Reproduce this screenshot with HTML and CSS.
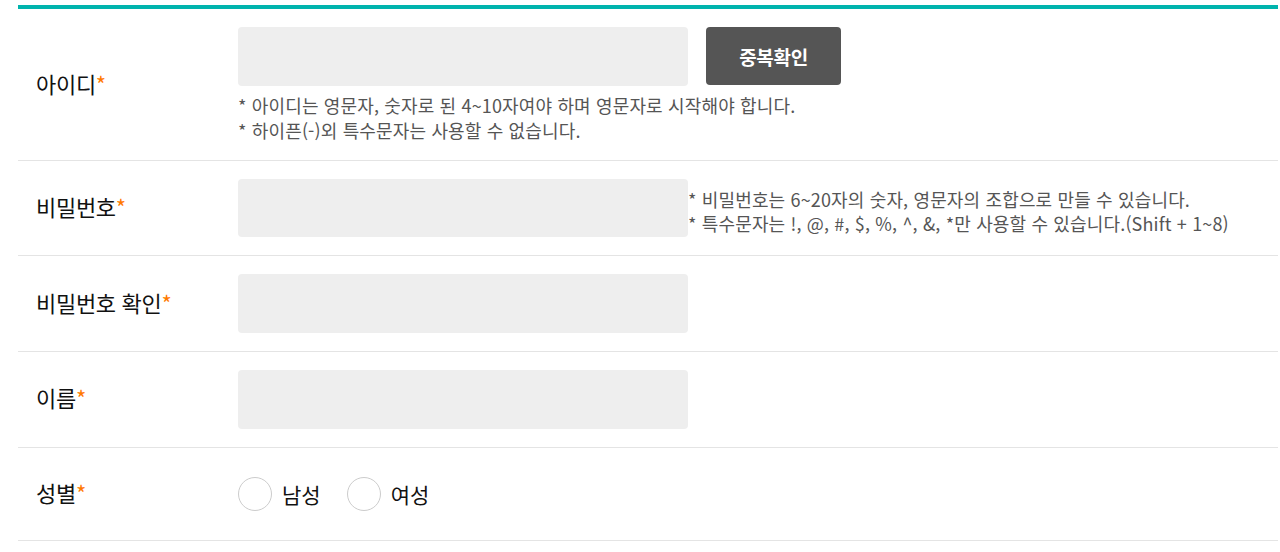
FILE: index.html
```html
<!DOCTYPE html>
<html lang="ko">
<head>
<meta charset="utf-8">
<link rel="stylesheet" href="styles.css">
</head>
<body>
<div class="form">
  <div class="row first">
    <div class="label">아이디<span class="req">*</span></div>
    <div class="field">
      <div class="line">
        <div class="input"></div>
        <button class="btn">중복확인</button>
      </div>
      <div class="help below">
        <p>* 아이디는 영문자, 숫자로 된 4~10자여야 하며 영문자로 시작해야 합니다.</p>
        <p>* 하이픈(-)외 특수문자는 사용할 수 없습니다.</p>
      </div>
    </div>
  </div>
  <div class="row">
    <div class="label">비밀번호<span class="req">*</span></div>
    <div class="field">
      <div class="line">
        <div class="input"></div>
        <div class="help side">
          <p>* 비밀번호는 6~20자의 숫자, 영문자의 조합으로 만들 수 있습니다.</p>
          <p>* 특수문자는 !, @, #, $, %, ^, &amp;, *만 사용할 수 있습니다.(Shift + 1~8)</p>
        </div>
      </div>
    </div>
  </div>
  <div class="row">
    <div class="label">비밀번호 확인<span class="req">*</span></div>
    <div class="field"><div class="input"></div></div>
  </div>
  <div class="row">
    <div class="label">이름<span class="req">*</span></div>
    <div class="field"><div class="input"></div></div>
  </div>
  <div class="row gender">
    <div class="label">성별<span class="req">*</span></div>
    <div class="field radios">
      <label class="radio"><span class="circle"></span>남성</label>
      <label class="radio"><span class="circle"></span>여성</label>
    </div>
  </div>
</div>
</body>
</html>
```
FILE: styles.css
```css
* { box-sizing: border-box; }
html, body { margin: 0; padding: 0; background: #fff; }
body {
  font-family: "Noto Sans CJK KR", "Noto Sans", sans-serif;
  color: #111;
}
.form {
  margin: 5px 2px 0 18px;
  border-top: 4px solid #00b4ad;
}
.row {
  display: flex;
  align-items: center;
  border-bottom: 1px solid #e4e4e4;
  padding: 18px 0 18px;
}
.row.first { padding-bottom: 17px; }
.label {
  width: 220px;
  padding-left: 18px;
  padding-bottom: 4px;
  font-size: 22px;
  line-height: 28px;
  letter-spacing: -0.3px;
  color: #111;
  flex: none;
}
.req { color: #ff7a00; }
.field { flex: 1; }
.line { display: flex; align-items: center; }
.input {
  width: 450px;
  height: 58.67px;
  background: #eeeeee;
  border-radius: 4px;
  flex: none;
}
.btn {
  margin-left: 18px;
  width: 135px;
  height: 58px;
  border: none;
  border-radius: 4px;
  background: #555555;
  color: #fff;
  font-family: "Noto Sans CJK KR", sans-serif;
  font-size: 19px;
  font-weight: 700;
  letter-spacing: -0.3px;
}
.help p {
  margin: 0;
  font-size: 18px;
  line-height: 25px;
  color: #555;
  letter-spacing: 0.15px;
  white-space: nowrap;
}
.help.below { margin-top: 7px; }
.help.side { padding-top: 6px; }
.help.side p { line-height: 24px; }
.gender { padding: 29px 0 29px; }
.radios { display: flex; align-items: center; }
.radio {
  display: flex;
  align-items: center;
  font-size: 21px;
  line-height: 28px;
  margin-right: 26px;
}
.circle {
  width: 34px;
  height: 34px;
  border: 1px solid #cccccc;
  border-radius: 50%;
  margin-right: 10px;
  background: #fff;
}
```
